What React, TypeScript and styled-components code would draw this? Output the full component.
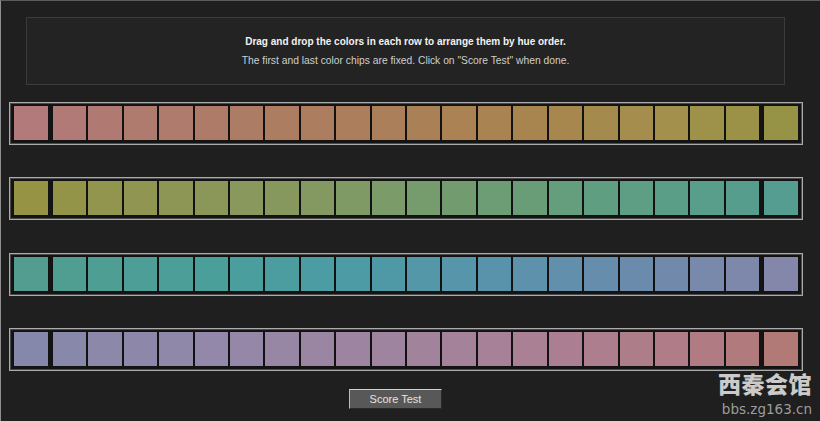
import React from 'react';
import styled, { createGlobalStyle } from 'styled-components';

const Global = createGlobalStyle`
  html, body { margin: 0; padding: 0; background: #1f1f1f; }
  body { font-family: "Liberation Sans", Arial, sans-serif; }
`;

const Frame = styled.div`
  position: relative;
  width: 820px;
  height: 421px;
  box-sizing: border-box;
  border-top: 1px solid #5c5c5c;
  border-left: 1px solid #8e8e8e;
  background: #1f1f1f;
  padding: 16px 0 0 8px;
  display: flex;
  flex-direction: column;
  align-items: flex-start;
  overflow: hidden;
`;

const Instructions = styled.div`
  margin-left: 17px;
  width: 759px;
  height: 68px;
  box-sizing: border-box;
  border: 1px solid #3b3b3b;
  background: #232323;
  padding-top: 14px;
  text-align: center;
`;

const Title = styled.div`
  font-size: 10px;
  font-weight: bold;
  line-height: 19px;
  color: #f2f2f2;
`;

const Note = styled.div`
  font-size: 10.3px;
  line-height: 19px;
  color: #cfcfcf;
`;

const Rows = styled.div`
  margin-top: 17px;
  display: flex;
  flex-direction: column;
  gap: 32.4px;
`;

const Row = styled.div`
  width: 794px;
  height: 43px;
  box-sizing: border-box;
  border: 1px solid #ababab;
  box-shadow: inset 0 0 0 1px #4a4a4a;
  background: #141414;
  padding: 2px 3px 3px 3px;
  display: flex;
  gap: 3px;
`;

const Group = styled.div`
  flex: 1;
  display: flex;
`;

const Chip = styled.div<{ $color: string; $fixed?: boolean }>`
  box-sizing: border-box;
  height: 36px;
  border: 1px solid #121212;
  background: ${(p) => p.$color};
  ${(p) => (p.$fixed ? 'width: 36px; flex: none;' : 'flex: 1 1 0; min-width: 0; cursor: move;')}
`;

const Button = styled.button`
  margin-top: 18px;
  margin-left: 340px;
  width: 93px;
  height: 20px;
  box-sizing: border-box;
  padding: 0;
  background: #585858;
  border-style: solid;
  border-width: 1px;
  border-color: #d2d2d2 #2a2a2a #2a2a2a #bdbdbd;
  color: #e4e4e4;
  font-family: "Liberation Sans", Arial, sans-serif;
  font-size: 11px;
  line-height: 18px;
`;

const Watermark = styled.div`
  position: absolute;
  right: 8px;
  bottom: 4px;
  display: flex;
  flex-direction: column;
  align-items: flex-end;
  pointer-events: none;
`;

const WmTitle = styled.div`
  font-family: "Noto Sans CJK SC", sans-serif;
  font-weight: 900;
  font-size: 23px;
  line-height: 24px;
  margin-bottom: 6px;
  color: rgba(235, 235, 235, 0.85);
  letter-spacing: 0.5px;
`;

const WmUrl = styled.div`
  font-family: "DejaVu Sans", sans-serif;
  font-size: 13.5px;
  line-height: 16px;
  color: rgba(190, 190, 190, 0.8);
`;

type Stop = [number, string];

const rows: Stop[][] = [
  [[0, '#b27a7a'], [5, '#ae7b68'], [10, '#ab7f59'], [14, '#a8844f'], [18, '#a2904c'], [21, '#979346']],
  [[0, '#969345'], [4, '#8e9656'], [8, '#839961'], [12, '#729c6f'], [16, '#5f9e81'], [21, '#559d91']],
  [[0, '#529d8f'], [5, '#4a9f9b'], [9, '#4c9ba5'], [13, '#5993ab'], [17, '#6b8bac'], [21, '#8487aa']],
  [[0, '#8588ab'], [5, '#9388a9'], [10, '#9f849f'], [15, '#ab7f91'], [19, '#b07b83'], [21, '#b17a77']],
];

const hex = (h: string) => [1, 3, 5].map((i) => parseInt(h.slice(i, i + 2), 16));

const colorAt = (stops: Stop[], i: number) => {
  for (let k = 0; k < stops.length - 1; k++) {
    const [a, ca] = stops[k];
    const [b, cb] = stops[k + 1];
    if (i >= a && i <= b) {
      const t = (i - a) / (b - a);
      const x = hex(ca);
      const y = hex(cb);
      const c = x.map((v, j) => Math.round(v + (y[j] - v) * t));
      return `rgb(${c[0]}, ${c[1]}, ${c[2]})`;
    }
  }
  return stops[stops.length - 1][1];
};

export default function App() {
  return (
    <>
      <Global />
      <Frame>
        <Instructions>
          <Title>Drag and drop the colors in each row to arrange them by hue order.</Title>
          <Note>The first and last color chips are fixed. Click on "Score Test" when done.</Note>
        </Instructions>
        <Rows>
          {rows.map((stops, r) => (
            <Row key={r}>
              <Chip $fixed $color={colorAt(stops, 0)} />
              <Group>
                {Array.from({ length: 20 }, (_, i) => (
                  <Chip key={i} $color={colorAt(stops, i + 1)} />
                ))}
              </Group>
              <Chip $fixed $color={colorAt(stops, 21)} />
            </Row>
          ))}
        </Rows>
        <Button type="button">Score Test</Button>
        <Watermark>
          <WmTitle>西秦会馆</WmTitle>
          <WmUrl>bbs.zg163.cn</WmUrl>
        </Watermark>
      </Frame>
    </>
  );
}
